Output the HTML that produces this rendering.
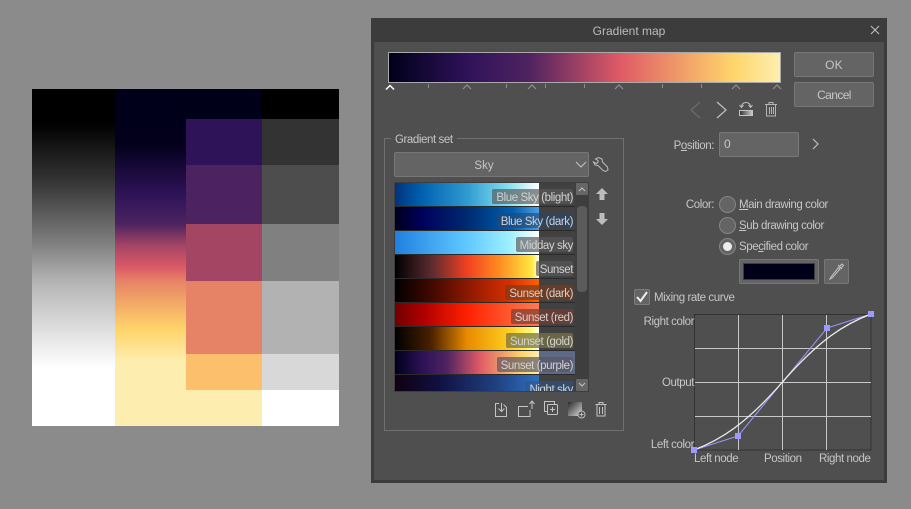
<!DOCTYPE html>
<html><head><meta charset="utf-8"><style>
html,body{margin:0;padding:0}
body{width:911px;height:509px;position:relative;overflow:hidden;background:#8b8b8b;font:12px/14px "Liberation Sans",sans-serif;color:#c6c6c6}
div{position:absolute;box-sizing:border-box}
.t{white-space:nowrap;font-size:11.5px;letter-spacing:-.42px;margin-top:1px}
.btn.t{margin-top:0}
.r{text-align:right}
.btn{background:#646464;border:1px solid #777;border-radius:2px;text-align:center}
u{text-underline-offset:1px}
.row{left:395px;width:180px;height:23px;background:#414141;overflow:hidden}
.g{left:0;top:0;width:144px;height:23px}
.l{right:2px;top:6px;height:15px;line-height:19px;padding:0 0 0 4px;background:rgba(88,88,88,.68);border-radius:2px;color:#d2d2d2;white-space:nowrap;font-size:11.5px;letter-spacing:-.42px}
.rad{left:719px;width:17px;height:17px;border-radius:50%;background:#646464;border:1px solid #858585}
svg{position:absolute;overflow:visible}
</style></head><body>
<!-- canvas -->
<div style="left:32px;top:89px;width:83px;height:337px;background:linear-gradient(180deg,#000 0,#000 10%,#333 27%,#808080 46%,#b3b3b3 57%,#e6e6e6 74%,#fff 83%,#fff 100%)"></div>
<div style="left:115px;top:89px;width:71px;height:337px;background:linear-gradient(180deg,#00001a 0,#02001a 16%,#2e1358 31.500%,#4c2360 40%,#a54564 46.500%,#dc5a66 53%,#e68367 57%,#f0a366 62.500%,#ffd56b 71.500%,#fdeeb0 81%,#fdeeb0 100%)"></div>
<div style="left:186px;top:89px;width:76px;height:30px;background:#000018"></div>
<div style="left:186px;top:119px;width:76px;height:46px;background:#2e1358"></div>
<div style="left:186px;top:165px;width:76px;height:59px;background:#4c2360"></div>
<div style="left:186px;top:224px;width:76px;height:57px;background:#a54564"></div>
<div style="left:186px;top:281px;width:76px;height:73px;background:#e68367"></div>
<div style="left:186px;top:354px;width:76px;height:36px;background:#fcc06c"></div>
<div style="left:186px;top:390px;width:76px;height:36px;background:#fdedaf"></div>
<div style="left:262px;top:89px;width:77px;height:30px;background:#000"></div>
<div style="left:262px;top:119px;width:77px;height:46px;background:#333"></div>
<div style="left:262px;top:165px;width:77px;height:59px;background:#4d4d4d"></div>
<div style="left:262px;top:224px;width:77px;height:57px;background:#808080"></div>
<div style="left:262px;top:281px;width:77px;height:73px;background:#b2b2b2"></div>
<div style="left:262px;top:354px;width:77px;height:36px;background:#d8d8d8"></div>
<div style="left:262px;top:390px;width:77px;height:36px;background:#fff"></div>

<!-- dialog -->
<div style="left:371px;top:18px;width:516px;height:465px;background:#3c3c3c"></div>
<div style="left:374px;top:42px;width:510px;height:438px;background:#4f4f4f"></div>
<div style="left:371px;top:24px;width:516px;text-align:center;color:#bcbcbc;white-space:nowrap">Gradient map</div>
<svg style="left:0;top:0" width="911" height="509" fill="none">
<path d="M871 26l8 8m0-8l-8 8" stroke="#c4c4c4" stroke-width="1"/>
</svg>
<!-- gradient bar -->
<div style="left:388px;top:52px;width:393px;height:31px;border:1px solid #aaa;background:linear-gradient(90deg,#00001a 0,#2f1259 20%,#4f2360 36%,#df5a66 59%,#ffd56b 88%,#fdeeb0 100%)"></div>
<svg style="left:0;top:0" width="911" height="509" fill="none">
<g stroke="#8c8c8c"><path d="M428.500 84v4M506.500 84v4M545.500 84v4M584.500 84v4M662.500 84v4M701.500 84v4"/></g>
<g stroke="#909090" stroke-width="1.200"><path d="M463 89l4-4 4 4M528 89l4-4 4 4M615 89l4-4 4 4M732 89l4-4 4 4M773 89l4-4 4 4"/></g>
<path d="M386 89.500l4-4 4 4" stroke="#fff" stroke-width="1.500"/>
<!-- nav icons -->
<path d="M700 102l-9 8 9 8" stroke="#6b6b6b" stroke-width="1.300"/>
<path d="M717 102l9 8-9 8" stroke="#bdbdbd" stroke-width="1.300"/>
<path d="M741.500 106.500a4.500 4 0 0 1 9 0M739.500 105l2 2.500 2-2.500M748.500 105l2 2.500 2-2.500" stroke="#c4c4c4"/>
<defs><linearGradient id="bw"><stop offset="0" stop-color="#333"/><stop offset="1" stop-color="#ccc"/></linearGradient></defs>
<rect x="739.500" y="110.500" width="13" height="5" fill="url(#bw)" stroke="#c4c4c4"/>
<g stroke="#b5b5b5"><path d="M765 104.500h12M769 104.500v-2h4v2M766.500 104.500v11.500h9v-11.500M769.500 107v7M771.500 107v7M773.500 107v7"/></g>
<!-- chevron -->
<path d="M813 139l5 5-5 5" stroke="#c0c0c0" stroke-width="1.200"/>
</svg>
<div class="btn t" style="left:794px;top:52px;width:80px;height:25px;line-height:25px;font-size:12px;letter-spacing:.2px">OK</div>
<div class="btn t" style="left:794px;top:82px;width:80px;height:25px;line-height:25px;font-size:12px;letter-spacing:-.6px">Cancel</div>
<div class="t r" style="left:640px;top:138px;width:74px"><span>P<u>o</u>sition:</span></div>
<div class="btn" style="left:719px;top:132px;width:80px;height:25px;text-align:left;padding:4px;line-height:14px">0</div>

<!-- gradient set -->
<div style="left:384px;top:138px;width:240px;height:293px;border:1px solid #707070"></div>
<div class="t" style="left:391px;top:132px;background:#4f4f4f;padding:0 4px">Gradient set</div>
<div class="btn t" style="left:394px;top:152px;width:195px;height:25px;line-height:26px;padding-right:15px;letter-spacing:0">Sky</div>
<svg style="left:0;top:0" width="911" height="509" fill="none">
<path d="M576 162l5 5 5-5" stroke="#c4c4c4"/>
<path d="M595.500 159l3-1.500 3.500 1.500.5 3 5 5 .5 3-2.500 1.500-2.500-1-5-5-3-.5-1.500-3 3 1.500 1.500-1v-2z" stroke="#bdbdbd"/>
</svg>
<div style="left:394px;top:182px;width:195px;height:210px;background:#3e3e3e"></div>
<div style="left:395px;top:183px;width:180px;height:208px;background:#2a2a2a"></div>

<div class="row" style="top:183px"><div class="g" style="background:linear-gradient(90deg,#00337a 0,#0060b0 18%,#2f9ad0 50%,#80e0f0 78%,#fff 100%)"></div><div class="l">Blue Sky (blight)</div></div>
<div class="row" style="top:207px"><div class="g" style="background:linear-gradient(90deg,#00001c 0,#00005a 18%,#002a70 50%,#0060b0 82%,#4aa0e8 100%)"></div><div class="l" style="background:rgba(40,70,110,.65)">Blue Sky (dark)</div></div>
<div class="row" style="top:231px"><div class="g" style="background:linear-gradient(90deg,#2080e0 0,#60c8ff 50%,#a0f0ff 80%,#fff 100%)"></div><div class="l">Midday sky</div></div>
<div class="row" style="top:255px"><div class="g" style="background:linear-gradient(90deg,#000 0,#5a2a30 25%,#f04020 50%,#ff8a20 72%,#ffe840 95%,#fffff0 100%)"></div><div class="l">Sunset</div></div>
<div class="row" style="top:279px"><div class="g" style="background:linear-gradient(90deg,#000 0,#400800 25%,#8a1800 50%,#d83000 80%,#ff6000 100%)"></div><div class="l" style="background:rgba(120,60,30,.7)">Sunset (dark)</div></div>
<div class="row" style="top:303px"><div class="g" style="background:linear-gradient(90deg,#700000 0,#b00000 20%,#ff2000 50%,#ff5a30 80%,#ff7a50 100%)"></div><div class="l" style="background:rgba(120,60,50,.7)">Sunset (red)</div></div>
<div class="row" style="top:327px"><div class="g" style="background:linear-gradient(90deg,#000 0,#4a2000 25%,#e88a00 50%,#ffd020 80%,#ffff80 96%,#fff 100%)"></div><div class="l" style="background:rgba(120,115,70,.75)">Sunset (gold)</div></div>
<div class="row" style="top:351px;background:#5d6a85"><div class="g" style="background:linear-gradient(90deg,#00001a 0,#2f1259 20%,#4f2360 36%,#df5a66 59%,#ffd56b 88%,#fdeeb0 100%)"></div><div class="l" style="background:rgba(90,85,100,.7)">Sunset (purple)</div></div>
<div class="row" style="top:375px;height:16px"><div class="g" style="background:linear-gradient(90deg,#100010 0,#101040 30%,#204080 70%,#3070c0 100%)"></div><div class="l" style="background:rgba(45,85,135,.6)">Night sky</div></div>

<!-- scrollbar -->
<div style="left:576px;top:183px;width:12px;height:12px;background:#666;border-radius:1px"></div>
<div style="left:577px;top:206px;width:10px;height:86px;background:#5b5b5b;border-radius:4px"></div>
<div style="left:576px;top:379px;width:12px;height:12px;background:#666;border-radius:1px"></div>
<svg style="left:0;top:0" width="911" height="509" fill="none">
<path d="M579 191l3-3 3 3M579 383l3 3 3-3" stroke="#c4c4c4"/>
<path d="M602 188l-6 6h3.500v6h5v-6h3.500zM602 225l-6-6h3.500v-6h5v6h3.500z" fill="#bdbdbd"/>
<!-- bottom icons -->
<g stroke="#c4c4c4">
<path d="M499 403.500h-3.500v13h11v-9l-3-3M501.500 403v8M498.500 408.500l3 3 3-3"/>
<path d="M530 410v6.500h-11.500v-10h9.500M532 409v-7M529.500 404l2.500-3 2.500 3"/>
<path d="M547.500 411.500h-3v-10h10v3"/><rect x="547.500" y="404.500" width="10" height="10" rx="1"/><path d="M552.500 407v5M550 409.500h5"/>
<path d="M595.500 404.500h11M599 404.500v-2h4v2M597 404.500v11.500h8v-11.500M599.500 407v7M602.500 407v7"/>
</g>
<defs><linearGradient id="sq" x1="0" y1="0" x2="1" y2="1"><stop offset="0" stop-color="#2a2a2a"/><stop offset="1" stop-color="#d8d8d8"/></linearGradient></defs>
<rect x="568" y="402" width="14" height="14" fill="url(#sq)"/>
<circle cx="581.500" cy="414.500" r="3.500" fill="#4f4f4f" stroke="#bcbcbc"/><path d="M579.500 414.500h4M581.500 412.500v4" stroke="#bcbcbc"/>
</svg>

<!-- colour -->
<div class="t r" style="left:640px;top:197px;width:74px">Color:</div>
<div class="rad" style="top:196px"></div>
<div class="rad" style="top:217px"></div>
<div class="rad" style="top:238px"><div style="left:3px;top:3px;width:9px;height:9px;border-radius:50%;background:#eee"></div></div>
<div class="t" style="left:739px;top:197px"><u>M</u>ain drawing color</div>
<div class="t" style="left:739px;top:218px"><u>S</u>ub drawing color</div>
<div class="t" style="left:739px;top:239px">Spe<u>c</u>ified color</div>
<div style="left:739px;top:259px;width:80px;height:25px;background:#646464;border:1px solid #777;border-radius:2px"></div>
<div style="left:743px;top:263px;width:72px;height:17px;background:#000018;border:1px solid #3c3c3c"></div>
<div class="btn" style="left:824px;top:259px;width:25px;height:25px"></div>
<svg style="left:0;top:0" width="911" height="509" fill="none">
<path d="M831 277l-1 2 2-1 8-9-1.500-1.500zM838 265l4 4M840 266l2-2 1.500 1.500-2 2" stroke="#c8c8c8"/>
</svg>
<div style="left:634px;top:289px;width:16px;height:16px;background:#646464;border:1px solid #7c7c7c;border-radius:2px"></div>
<svg style="left:0;top:0" width="911" height="509" fill="none">
<path d="M637 297l3.500 4 6.500-9" stroke="#eee" stroke-width="2"/>
</svg>
<div class="t" style="left:654px;top:290px">Mixin<u>g</u> rate curve</div>

<!-- curve -->
<svg style="left:0;top:0" width="911" height="509" fill="none">
<rect x="694.500" y="314.500" width="176.500" height="135.500" stroke="#333"/>
<g stroke="#c8c8c8"><path d="M738.500 315v135M782.500 315v135M826.500 315v135M695 348.500h176M695 382.500h176M695 416.500h176"/></g>
<path d="M694 450L738 436L827 328L871 314" stroke="#9a9aff"/>
<path d="M694 450C720 440 745 425 782.500 382C820 339 845 324 871 314" stroke="#eee" stroke-width="1.300"/>
<g fill="#9a9aff"><rect x="691" y="447" width="6" height="6"/><rect x="735" y="433" width="6" height="6"/><rect x="824" y="325" width="6" height="6"/><rect x="868" y="311" width="6" height="6"/></g>
</svg>
<div class="t r" style="left:620px;top:314px;width:74px">Right color</div>
<div class="t r" style="left:620px;top:375px;width:74px">Output</div>
<div class="t r" style="left:620px;top:437px;width:74px">Left color</div>
<div class="t" style="left:694px;top:451px">Left node</div>
<div class="t" style="left:764px;top:451px">Position</div>
<div class="t" style="left:819px;top:451px">Right node</div>
</body></html>
